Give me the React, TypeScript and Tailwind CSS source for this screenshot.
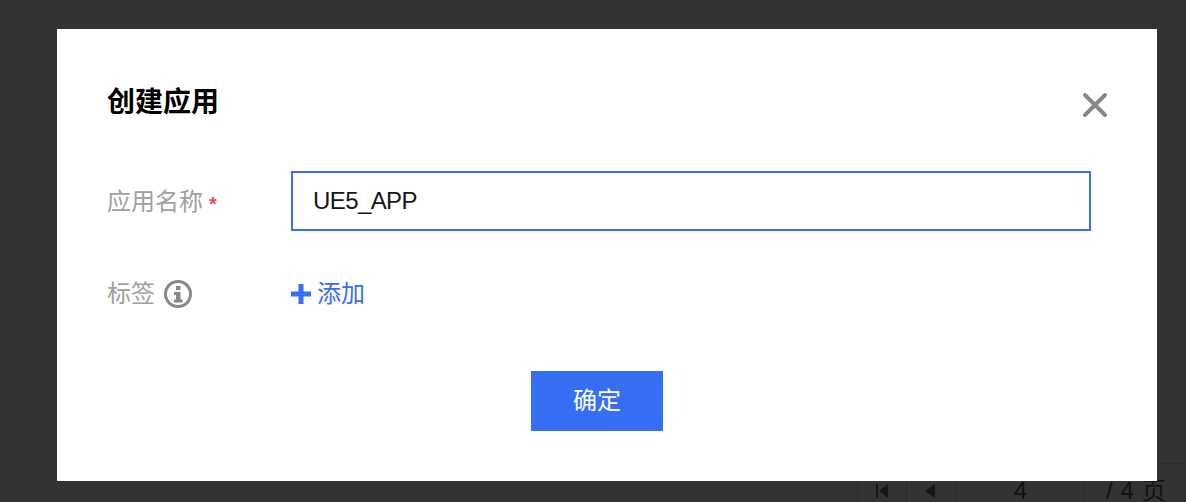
export default function App() {
  return (
    <div className="relative h-[502px] w-[1186px] overflow-hidden bg-[#333333] font-['Liberation_Sans','Noto_Sans_CJK_SC',sans-serif]">
      {/* pagination behind the mask */}
      <div className="absolute left-[857px] right-0 top-[463px] flex h-[54px] border-t border-r border-[#2c2c2c]">
        <div className="flex h-full w-[50px] items-center justify-center border-x border-[#2c2c2c]">
          <svg width="14" height="16" viewBox="0 0 14 16" className="fill-[#161616]">
            <rect x="1" y="1" width="2" height="14" />
            <path d="M13 1 V15 L4 8 Z" />
          </svg>
        </div>
        <div className="flex h-full w-[50px] items-center justify-center border-r border-[#2c2c2c] pr-[3px]">
          <svg width="12" height="16" viewBox="0 0 12 16" className="fill-[#161616]">
            <path d="M11 1 V15 L1 8 Z" />
          </svg>
        </div>
        <div className="flex h-full w-[128px] items-center justify-center border-r border-[#2c2c2c] text-[24px] text-[#111111]">4</div>
        <div className="ml-[21px] flex items-center text-[24px] tracking-[0.6px] text-[#111111]">/ 4 页</div>
      </div>

      <div className="absolute left-[57px] top-[29px] h-[452px] w-[1100px] bg-white pl-[50px] pr-[66px] pt-[53px]">
        <div className="flex items-start justify-between">
          <h2 className="text-[28px] font-bold leading-[42px] text-black">创建应用</h2>
          <button className="absolute right-[49px] top-[63px] text-[#888888]">
            <svg width="26" height="26" viewBox="0 0 26 26" fill="none" stroke="currentColor" strokeWidth="4" strokeLinecap="round">
              <path d="M3 3 L23 23 M23 3 L3 23" />
            </svg>
          </button>
        </div>

        <div className="mt-[47px] flex items-center">
          <label className="flex w-[184px] items-center pt-[2px] text-[24px] text-[#a0a0a0]">
            应用名称
            <span className="ml-[6px] mt-[4px] text-[20px] font-bold text-[#d9534f]">*</span>
          </label>
          <input
            readOnly
            value="UE5_APP"
            className="h-[60px] w-[800px] border-2 border-[#366ef4] px-[20px] text-[24px] tracking-[-0.6px] text-[#161616] outline-none"
          />
        </div>

        <div className="mt-[45px] flex items-center">
          <div className="flex w-[184px] items-center gap-[9px] text-[24px] text-[#a0a0a0]">
            标签
            <svg width="28" height="28" viewBox="0 0 28 28" fill="none">
              <circle cx="14" cy="14" r="12.5" stroke="#888888" strokeWidth="3" />
              <rect x="12" y="6" width="4.5" height="4" fill="#888888" />
              <path d="M10 12 H16.5 V19.5 H18.5 V22.5 H10 V19.5 H12 V15 H10 Z" fill="#888888" />
            </svg>
          </div>
          <button className="flex items-center gap-[6px] text-[24px] text-[#366ef4]">
            <svg width="20" height="20" viewBox="0 0 20 20" fill="#366ef4">
              <rect x="7.5" y="0" width="5" height="20" />
              <rect x="0" y="7.5" width="20" height="5" />
            </svg>
            添加
          </button>
        </div>

        <div className="mt-[59px] flex justify-center">
          <button className="-ml-[4px] h-[60px] w-[132px] bg-[#366ef4] text-[24px] text-white">确定</button>
        </div>
      </div>
    </div>
  );
}
